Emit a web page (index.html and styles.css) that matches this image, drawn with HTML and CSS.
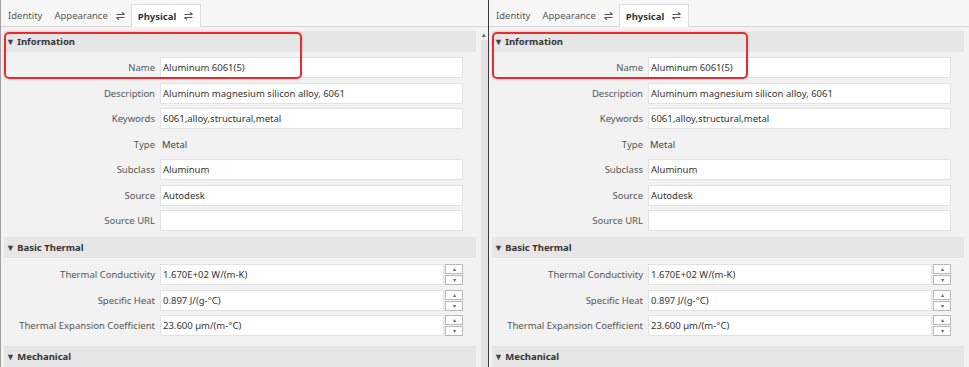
FILE: index.html
```html
<!DOCTYPE html>
<html>
<head>
<meta charset="utf-8">
<link rel="stylesheet" href="styles.css">
</head>
<body>
<div class="page">
  <div class="panel panel-left">
    <div class="tabs">
      <div class="tab">Identity</div>
      <div class="tab">Appearance <svg class="swap" viewBox="0 0 9 8" width="9" height="8"><path d="M0.5 2.5H8.5M6 0.3L8.5 2.5M0.5 5.5H8.5M0.5 5.5L3 7.7" fill="none" stroke="#555" stroke-width="1.2"/></svg></div>
      <div class="tab tab-active">Physical <svg class="swap" viewBox="0 0 9 8" width="9" height="8"><path d="M0.5 2.5H8.5M6 0.3L8.5 2.5M0.5 5.5H8.5M0.5 5.5L3 7.7" fill="none" stroke="#555" stroke-width="1.2"/></svg></div>
    </div>
    <div class="body">
      <div class="content">
        <div class="section">▼ <span>Information</span></div>
        <div class="rows">
          <div class="row"><div class="label">Name</div><div class="field">Aluminum 6061(5)</div></div>
          <div class="row"><div class="label">Description</div><div class="field">Aluminum magnesium silicon alloy, 6061</div></div>
          <div class="row"><div class="label">Keywords</div><div class="field">6061,alloy,structural,metal</div></div>
          <div class="row"><div class="label">Type</div><div class="plain">Metal</div></div>
          <div class="row"><div class="label">Subclass</div><div class="field">Aluminum</div></div>
          <div class="row"><div class="label">Source</div><div class="field">Autodesk</div></div>
          <div class="row"><div class="label">Source URL</div><div class="field"></div></div>
        </div>
        <div class="section section-gap">▼ <span>Basic Thermal</span></div>
        <div class="rows thermal">
          <div class="row"><div class="label">Thermal Conductivity</div><div class="spinrow"><div class="field">1.670E+02 W/(m-K)</div><div class="spin"><div class="sbtn">▴</div><div class="sbtn">▾</div></div></div></div>
          <div class="row"><div class="label">Specific Heat</div><div class="spinrow"><div class="field">0.897 J/(g-°C)</div><div class="spin"><div class="sbtn">▴</div><div class="sbtn">▾</div></div></div></div>
          <div class="row"><div class="label">Thermal Expansion Coefficient</div><div class="spinrow"><div class="field">23.600 µm/(m-°C)</div><div class="spin"><div class="sbtn">▴</div><div class="sbtn">▾</div></div></div></div>
        </div>
        <div class="section section-mech">▼ <span>Mechanical</span></div>
      </div>
      <div class="scrollbar"><div class="sarrow">▴</div><div class="strack"></div></div>
    </div>
    <div class="highlight"></div>
  </div>

  <div class="panel panel-right">
    <div class="tabs">
      <div class="tab">Identity</div>
      <div class="tab">Appearance <svg class="swap" viewBox="0 0 9 8" width="9" height="8"><path d="M0.5 2.5H8.5M6 0.3L8.5 2.5M0.5 5.5H8.5M0.5 5.5L3 7.7" fill="none" stroke="#555" stroke-width="1.2"/></svg></div>
      <div class="tab tab-active">Physical <svg class="swap" viewBox="0 0 9 8" width="9" height="8"><path d="M0.5 2.5H8.5M6 0.3L8.5 2.5M0.5 5.5H8.5M0.5 5.5L3 7.7" fill="none" stroke="#555" stroke-width="1.2"/></svg></div>
    </div>
    <div class="body">
      <div class="content">
        <div class="section">▼ <span>Information</span></div>
        <div class="rows">
          <div class="row"><div class="label">Name</div><div class="field">Aluminum 6061(5)</div></div>
          <div class="row"><div class="label">Description</div><div class="field">Aluminum magnesium silicon alloy, 6061</div></div>
          <div class="row"><div class="label">Keywords</div><div class="field">6061,alloy,structural,metal</div></div>
          <div class="row"><div class="label">Type</div><div class="plain">Metal</div></div>
          <div class="row"><div class="label">Subclass</div><div class="field">Aluminum</div></div>
          <div class="row"><div class="label">Source</div><div class="field">Autodesk</div></div>
          <div class="row"><div class="label">Source URL</div><div class="field"></div></div>
        </div>
        <div class="section section-gap">▼ <span>Basic Thermal</span></div>
        <div class="rows thermal">
          <div class="row"><div class="label">Thermal Conductivity</div><div class="spinrow"><div class="field">1.670E+02 W/(m-K)</div><div class="spin"><div class="sbtn">▴</div><div class="sbtn">▾</div></div></div></div>
          <div class="row"><div class="label">Specific Heat</div><div class="spinrow"><div class="field">0.897 J/(g-°C)</div><div class="spin"><div class="sbtn">▴</div><div class="sbtn">▾</div></div></div></div>
          <div class="row"><div class="label">Thermal Expansion Coefficient</div><div class="spinrow"><div class="field">23.600 µm/(m-°C)</div><div class="spin"><div class="sbtn">▴</div><div class="sbtn">▾</div></div></div></div>
        </div>
        <div class="section section-mech">▼ <span>Mechanical</span></div>
      </div>
      <div class="scrollbar"><div class="sarrow"></div><div class="strack"></div></div>
    </div>
    <div class="highlight"></div>
  </div>
</div>
</body>
</html>
```

FILE: styles.css
```css
html, body {
  margin: 0;
  padding: 0;
  background: #f2f2f2;
  overflow: hidden;
}
.page {
  display: flex;
  width: 969px;
  height: 367px;
  overflow: hidden;
  font-family: "Noto Sans", "Open Sans", sans-serif;
  font-size: 9.5px;
  color: #333;
}
.panel {
  position: relative;
  flex: 0 0 487px;
  width: 487px;
  height: 367px;
  display: flex;
  flex-direction: column;
  background: #f2f2f2;
}
.panel-left { border-left: 1px solid #a0a0a0; }
.panel-right { border-left: 1px solid #3a3a3a; }
.tabs {
  height: 27px;
  box-sizing: border-box;
  border-bottom: 1px solid #d6d6d6;
  background: #f7f7f7;
  display: flex;
  align-items: flex-end;
  padding-left: 1px;
}
.tab {
  height: 21px;
  display: flex;
  align-items: center;
  padding: 0 6px;
  margin-right: 0;
  color: #555;
}
.tab .swap { margin-left: 8px; }
.tab-active {
  background: #fff;
  border: 1px solid #dcdcdc;
  border-bottom: none;
  height: 22px;
  margin-bottom: -1px;
  font-weight: bold;
  color: #333;
  padding: 0 7px 0 6px;
}
.body {
  flex: 1;
  display: flex;
  padding-top: 4px;
}
.content {
  width: 472px;
  padding-left: 3px;
}
.section {
  height: 21px;
  background: #e6e6e6;
  display: flex;
  align-items: center;
  padding-left: 2px;
  font-size: 9px;
  color: #444;
  white-space: pre;
}
.section span {
  font-size: 9.5px;
  font-weight: bold;
  color: #333;
}
.section-gap { margin-top: 6px; }
.section-mech { margin-top: 10px; }
.rows {
  display: flex;
  flex-direction: column;
  gap: 4.5px;
  margin-top: 5px;
}
.thermal { margin-top: 6px; }
.row {
  display: grid;
  grid-template-columns: 151px 303px;
  column-gap: 5px;
  height: 21px;
  align-items: center;
}
.label {
  text-align: right;
  color: #555;
  white-space: nowrap;
}
.field {
  height: 21px;
  box-sizing: border-box;
  background: #fff;
  border: 1px solid #e2e2e2;
  display: flex;
  align-items: center;
  padding-left: 2px;
  color: #333;
  white-space: nowrap;
}
.plain {
  padding-left: 2px;
  color: #444;
}
.spinrow {
  display: flex;
  gap: 1px;
}
.spinrow .field { flex: 1; }
.spin {
  width: 18px;
  display: flex;
  flex-direction: column;
  justify-content: space-between;
  height: 21px;
}
.sbtn {
  height: 10px;
  box-sizing: border-box;
  border: 1px solid #b8b8b8;
  background: #fff;
  font-size: 6px;
  color: #666;
  display: flex;
  align-items: center;
  justify-content: center;
  line-height: 1;
}
.scrollbar {
  width: 8px;
  margin-left: 4px;
  display: flex;
  flex-direction: column;
  align-items: center;
}
.sarrow {
  height: 8px;
  font-size: 7px;
  line-height: 8px;
  color: #555;
}
.strack {
  flex: 1;
  width: 7px;
  background: #e2e2e2;
  margin-top: 1px;
}
.highlight {
  position: absolute;
  left: 3px;
  top: 32px;
  width: 298px;
  height: 47px;
  box-sizing: border-box;
  border: 2px solid #ea2a2f;
  border-radius: 5px;
  box-shadow: 0 0 3px rgba(0,0,0,0.15);
}
.panel-right .highlight { left: 3px; width: 256px; }
```
